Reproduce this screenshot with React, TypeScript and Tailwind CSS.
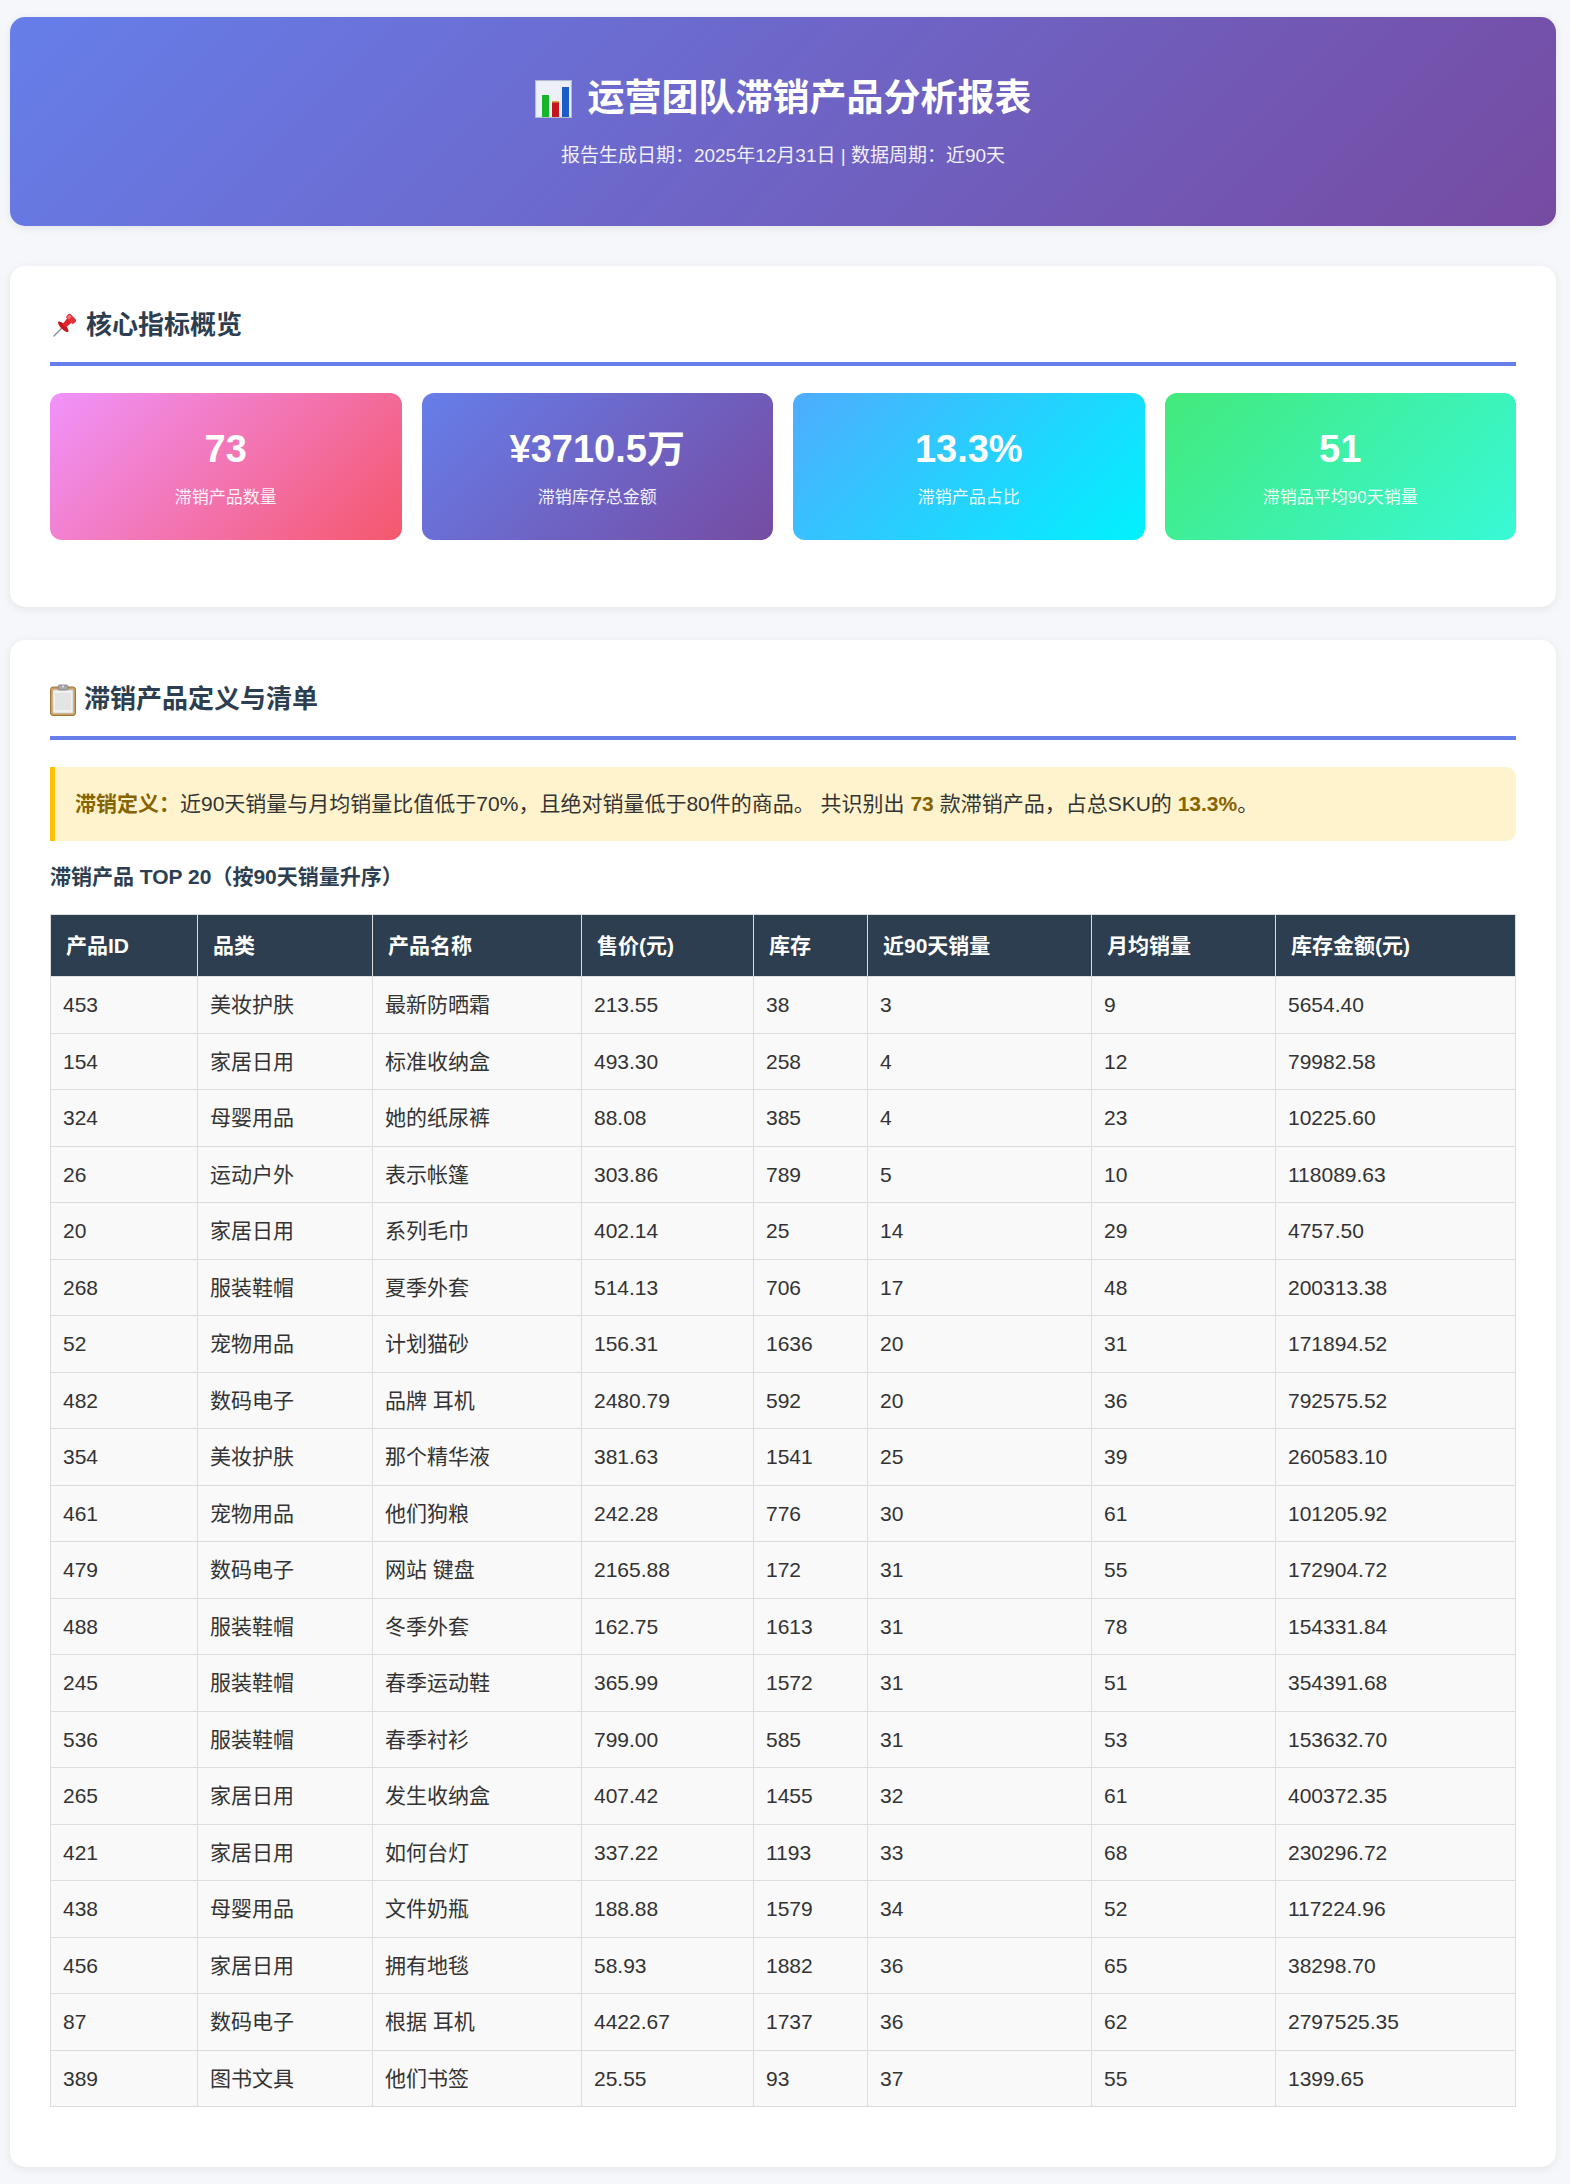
import React from "react";

type Row = [string, string, string, string, string, string, string, string];

const rows: Row[] = [
  ["453", "美妆护肤", "最新防晒霜", "213.55", "38", "3", "9", "5654.40"],
  ["154", "家居日用", "标准收纳盒", "493.30", "258", "4", "12", "79982.58"],
  ["324", "母婴用品", "她的纸尿裤", "88.08", "385", "4", "23", "10225.60"],
  ["26", "运动户外", "表示帐篷", "303.86", "789", "5", "10", "118089.63"],
  ["20", "家居日用", "系列毛巾", "402.14", "25", "14", "29", "4757.50"],
  ["268", "服装鞋帽", "夏季外套", "514.13", "706", "17", "48", "200313.38"],
  ["52", "宠物用品", "计划猫砂", "156.31", "1636", "20", "31", "171894.52"],
  ["482", "数码电子", "品牌 耳机", "2480.79", "592", "20", "36", "792575.52"],
  ["354", "美妆护肤", "那个精华液", "381.63", "1541", "25", "39", "260583.10"],
  ["461", "宠物用品", "他们狗粮", "242.28", "776", "30", "61", "101205.92"],
  ["479", "数码电子", "网站 键盘", "2165.88", "172", "31", "55", "172904.72"],
  ["488", "服装鞋帽", "冬季外套", "162.75", "1613", "31", "78", "154331.84"],
  ["245", "服装鞋帽", "春季运动鞋", "365.99", "1572", "31", "51", "354391.68"],
  ["536", "服装鞋帽", "春季衬衫", "799.00", "585", "31", "53", "153632.70"],
  ["265", "家居日用", "发生收纳盒", "407.42", "1455", "32", "61", "400372.35"],
  ["421", "家居日用", "如何台灯", "337.22", "1193", "33", "68", "230296.72"],
  ["438", "母婴用品", "文件奶瓶", "188.88", "1579", "34", "52", "117224.96"],
  ["456", "家居日用", "拥有地毯", "58.93", "1882", "36", "65", "38298.70"],
  ["87", "数码电子", "根据 耳机", "4422.67", "1737", "36", "62", "2797525.35"],
  ["389", "图书文具", "他们书签", "25.55", "93", "37", "55", "1399.65"],
];

const headers = ["产品ID", "品类", "产品名称", "售价(元)", "库存", "近90天销量", "月均销量", "库存金额(元)"];

function ChartIcon() {
  return (
    <svg width="37" height="38" viewBox="0 0 37 38" className="shrink-0">
      <rect x="0.5" y="0.5" width="36" height="37" fill="#e6eaf4" stroke="#b3bbcf" />
      <rect x="2" y="2" width="33" height="34" fill="#edf0f7" />
      <rect x="7" y="15" width="7" height="22" fill="#17b52e" />
      <rect x="17" y="21" width="7" height="16" fill="#c3151b" />
      <rect x="17" y="21" width="7" height="1.5" fill="#d9a640" />
      <rect x="27" y="7" width="7" height="30" fill="#1c5cc8" />
    </svg>
  );
}

function PinIcon() {
  return (
    <svg width="28" height="28" viewBox="0 0 32 32" className="shrink-0">
      <g transform="rotate(45 18 14)">
        <line x1="18" y1="19" x2="18" y2="33" stroke="#8a8f99" strokeWidth="1.6" strokeLinecap="round" />
        <ellipse cx="18" cy="18" rx="8" ry="2.8" fill="#c8141c" />
        <path d="M14.5 8 L21.5 8 L20.5 17 L15.5 17 Z" fill="#e0242c" />
        <rect x="12" y="2" width="12" height="6.5" rx="2" fill="#e5303a" />
        <rect x="13.5" y="3" width="3" height="4.5" rx="1" fill="#f27a80" />
      </g>
    </svg>
  );
}

function ClipboardIcon() {
  return (
    <svg width="26" height="32" viewBox="0 0 26 32" className="shrink-0">
      <rect x="0.5" y="3" width="25" height="28.5" rx="2.5" fill="#c9a063" stroke="#9e7738" />
      <rect x="3" y="6" width="20" height="23" fill="#f1f1f1" stroke="#cfcfcf" strokeWidth="0.8" />
      <rect x="5" y="9" width="16" height="17" fill="#e4e4e4" />
      <rect x="8" y="1" width="10" height="5" rx="1.5" fill="#a9a9a9" stroke="#7f7f7f" strokeWidth="0.8" />
      <circle cx="13" cy="2.6" r="1" fill="#eeeeee" />
    </svg>
  );
}

function SectionTitle({ icon, children }: { icon: React.ReactNode; children: React.ReactNode }) {
  return (
    <h2 className="flex items-center gap-[8px] text-[26px] leading-[39px] font-bold text-[#2c3e50] pb-[17px] border-b-4 border-[#667eea] mb-[27px]">
      {icon}
      <span>{children}</span>
    </h2>
  );
}

const stats = [
  { value: "73", label: "滞销产品数量", bg: "bg-[linear-gradient(135deg,#f093fb_0%,#f5576c_100%)]" },
  { value: "¥3710.5万", label: "滞销库存总金额", bg: "bg-[linear-gradient(135deg,#667eea_0%,#764ba2_100%)]" },
  { value: "13.3%", label: "滞销产品占比", bg: "bg-[linear-gradient(135deg,#4facfe_0%,#00f2fe_100%)]" },
  { value: "51", label: "滞销品平均90天销量", bg: "bg-[linear-gradient(135deg,#43e97b_0%,#38f9d7_100%)]" },
];

export default function App() {
  return (
    <div className="min-h-screen bg-[#f5f7fa] pl-[10px] pr-[14px] pt-[17px] pb-[17px] text-[#333] [font-family:'Liberation_Sans','Noto_Sans_CJK_SC',sans-serif]">
      {/* Header */}
      <header className="rounded-[15px] bg-[linear-gradient(135deg,#667eea_0%,#764ba2_100%)] text-white text-center pt-[60px] pb-[56px] mb-[40px] shadow-[0_2px_10px_rgba(0,0,0,0.08)]">
        <h1 className="flex items-center justify-center gap-[16px] text-[37px] leading-[44px] font-bold mb-[21px]">
          <ChartIcon />
          <span>运营团队滞销产品分析报表</span>
        </h1>
        <p className="text-[19px] leading-[28px] opacity-90">报告生成日期：2025年12月31日 | 数据周期：近90天</p>
      </header>

      {/* Overview */}
      <section className="bg-white rounded-[15px] p-10 mb-[33px] shadow-[0_2px_10px_rgba(0,0,0,0.08)]">
        <SectionTitle icon={<PinIcon />}>核心指标概览</SectionTitle>
        <div className="grid grid-cols-4 gap-5 mb-[27px]">
          {stats.map((s) => (
            <div key={s.label} className={`${s.bg} rounded-[12px] text-white text-center pt-[33px] pb-[29px]`}>
              <div className="text-[38px] leading-[46px] font-bold mb-[13px]">{s.value}</div>
              <div className="text-[17px] leading-[26px] opacity-90">{s.label}</div>
            </div>
          ))}
        </div>
      </section>

      {/* Definition and list */}
      <section className="bg-white rounded-[15px] p-10 shadow-[0_2px_10px_rgba(0,0,0,0.08)]">
        <SectionTitle icon={<ClipboardIcon />}>滞销产品定义与清单</SectionTitle>

        <div className="bg-[#fff3cd] border-l-[5px] border-[#ffc107] rounded-r-[10px] px-5 py-5 text-[21px] leading-[34px] text-[#333]">
          <strong className="text-[#856404]">滞销定义：</strong>
          近90天销量与月均销量比值低于70%，且绝对销量低于80件的商品。 共识别出{" "}
          <strong className="text-[#856404]">73</strong> 款滞销产品，占总SKU的{" "}
          <strong className="text-[#856404]">13.3%</strong>。
        </div>

        <h3 className="text-[21px] leading-[32px] font-bold text-[#2c3e50] mt-[20px] mb-[21px]">
          滞销产品 TOP 20（按90天销量升序）
        </h3>

        <table className="w-full table-fixed border-collapse text-[21px] mb-[20px]">
          <colgroup>
            <col className="w-[147px]" />
            <col className="w-[175px]" />
            <col className="w-[209px]" />
            <col className="w-[172px]" />
            <col className="w-[114px]" />
            <col className="w-[224px]" />
            <col className="w-[184px]" />
            <col className="w-[240px]" />
          </colgroup>
          <thead>
            <tr>
              {headers.map((h) => (
                <th
                  key={h}
                  className="bg-[#2c3e50] text-white font-bold text-left px-[15px] py-[15px] leading-[31px] border border-[#ddd]"
                >
                  {h}
                </th>
              ))}
            </tr>
          </thead>
          <tbody>
            {rows.map((r) => (
              <tr key={r[0]} className="bg-[#f9f9f9]">
                {r.map((c, i) => (
                  <td key={i} className="px-3 py-3 leading-[31.5px] border border-[#ddd] text-[#333]">
                    {c}
                  </td>
                ))}
              </tr>
            ))}
          </tbody>
        </table>
      </section>
    </div>
  );
}
